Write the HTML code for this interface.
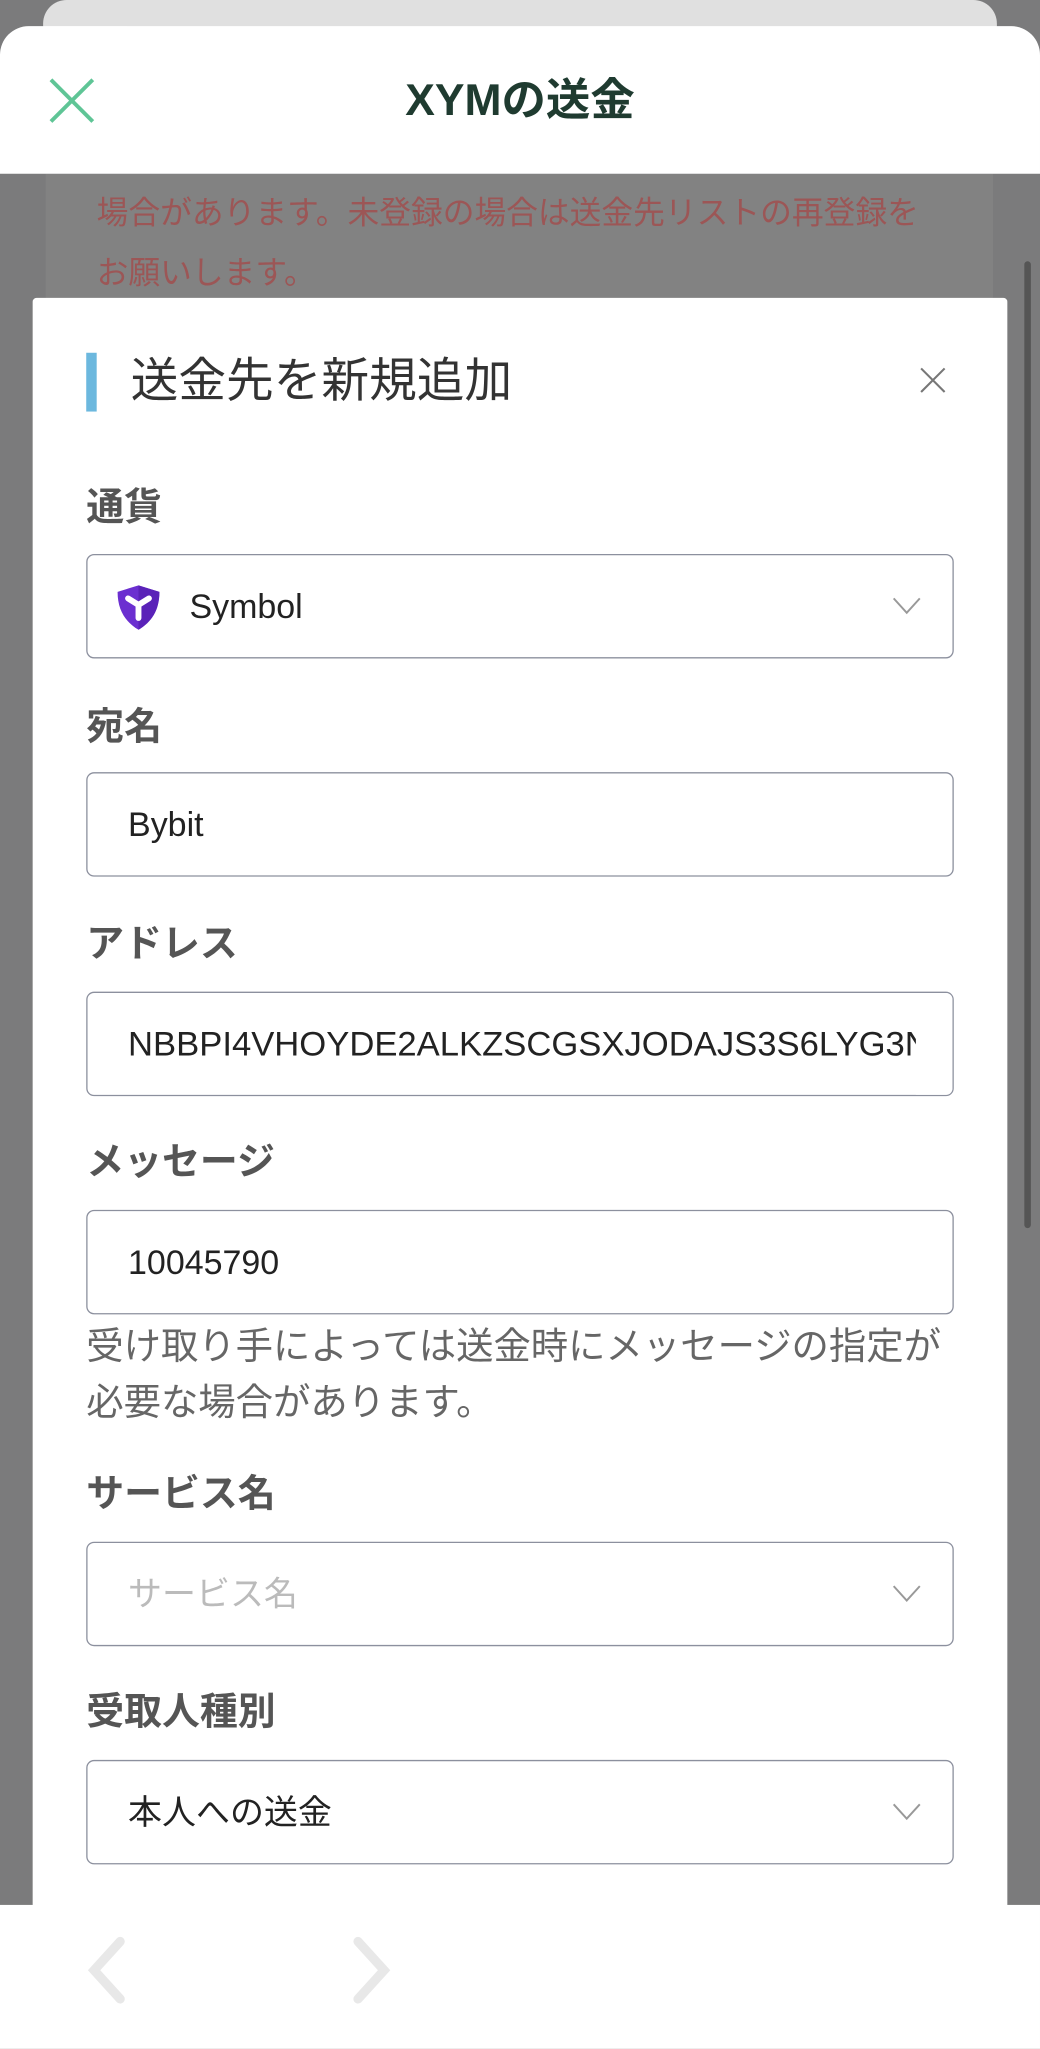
<!DOCTYPE html>
<html><head><meta charset="utf-8"><style>
html,body{margin:0;padding:0;width:1040px;height:2048px;overflow:hidden;background:#fff}
#w{position:absolute;left:0;top:0;width:796px;height:1568px;transform:scale(1.30653);transform-origin:0 0;background:#7b7b7c;font-family:"Liberation Sans","Noto Sans CJK JP",sans-serif;overflow:hidden}
.a{position:absolute}
.lbl{position:absolute;left:66px;font-size:29px;font-weight:bold;color:#555;line-height:32px}
.f{position:absolute;left:66px;width:662px;height:78px;border:1px solid #8c909e;border-radius:6px;background:#fff;box-sizing:content-box}
.f span{position:absolute;left:31px;top:0;line-height:78px;font-size:26px;color:#222;white-space:nowrap}
.chev{position:absolute;right:24px;top:32px}
</style></head><body><div id="w">
<div class="a" style="left:33px;top:0;width:730px;height:40px;background:#e0e0e0;border-radius:18px"></div>
<div class="a" style="left:35px;top:133px;width:725px;height:100px;background:#828282"></div>
<div class="a" style="left:74px;top:141px;font-size:24.3px;line-height:46px;color:#9c5656;white-space:nowrap">場合があります。未登録の場合は送金先リストの再登録を<br>お願いします。</div>
<div class="a" style="left:0;top:20px;width:796px;height:113px;background:#fff;border-radius:22px 22px 0 0"></div>
<svg class="a" style="left:36px;top:58px" width="38" height="38" viewBox="0 0 38 38"><path d="M3 3L35 35M35 3L3 35" stroke="#5fc596" stroke-width="3"/></svg>
<div class="a" style="left:0;width:796px;top:55px;text-align:center;font-size:34px;font-weight:bold;color:#1f3b30;line-height:44px">XYMの送金</div>
<div class="a" style="left:784px;top:200px;width:5px;height:740px;background:#555;border-radius:3px"></div>
<div class="a" style="left:25px;top:228px;width:746px;height:1240px;background:#fff;border-radius:3px"></div>
<div class="a" style="left:66px;top:270px;width:8px;height:45px;background:#6cb8de"></div>
<div class="a" style="left:100px;top:270px;font-size:36.5px;color:#333;line-height:44px;white-space:nowrap">送金先を新規追加</div>
<svg class="a" style="left:704px;top:281px" width="20" height="20" viewBox="0 0 20 20"><path d="M1 1L19 19M19 1L1 19" stroke="#777" stroke-width="1.6"/></svg>
<div class="lbl" style="top:373px">通貨</div>
<div class="f" style="top:424px"><svg class="a" style="left:22px;top:22px" width="34" height="36" viewBox="0 0 34 36"><path d="M17 1L33 6C33 20 27 29 17 35C7 29 1 20 1 6Z" fill="#6b2fd0"/><path d="M17 1L33 6C33 20 27 29 17 35Z" fill="#5a22b8"/><path d="M9 11L17 16L25 11M17 16V26" stroke="#fff" stroke-width="4.5" fill="none" stroke-linecap="round"/></svg><span style="left:78px">Symbol</span><svg class="chev" width="22" height="14" viewBox="0 0 22 14"><path d="M1 1L11 12L21 1" stroke="#999" stroke-width="1.5" fill="none"/></svg></div>
<div class="lbl" style="top:541px">宛名</div>
<div class="f" style="top:591px"><span>Bybit</span></div>
<div class="lbl" style="top:707px">アドレス</div>
<div class="f" style="top:759px;overflow:hidden"><span style="font-size:26.5px">NBBPI4VHOYDE2ALKZSCGSXJODAJS3S6LYG3N</span><div class="a" style="right:0;top:0;width:28px;height:78px;background:#fff"></div></div>
<div class="lbl" style="top:874px">メッセージ</div>
<div class="f" style="top:926px"><span>10045790</span></div>
<div class="a" style="left:66px;top:1010px;font-size:28.6px;line-height:43px;color:#666;white-space:nowrap">受け取り手によっては送金時にメッセージの指定が<br>必要な場合があります。</div>
<div class="lbl" style="top:1128px">サービス名</div>
<div class="f" style="top:1180px"><span style="color:#bbb">サービス名</span><svg class="chev" width="22" height="14" viewBox="0 0 22 14"><path d="M1 1L11 12L21 1" stroke="#999" stroke-width="1.5" fill="none"/></svg></div>
<div class="lbl" style="top:1295px">受取人種別</div>
<div class="f" style="top:1347px"><span>本人への送金</span><svg class="chev" width="22" height="14" viewBox="0 0 22 14"><path d="M1 1L11 12L21 1" stroke="#999" stroke-width="1.5" fill="none"/></svg></div>
<div class="a" style="left:0;top:1458px;width:796px;height:110px;background:#fff"></div>
<svg class="a" style="left:64px;top:1482px" width="36" height="52" viewBox="0 0 36 52"><path d="M28 4L8 26L28 48" stroke="#e8e8e8" stroke-width="7" fill="none" stroke-linecap="round"/></svg>
<svg class="a" style="left:266px;top:1482px" width="36" height="52" viewBox="0 0 36 52"><path d="M8 4L28 26L8 48" stroke="#e8e8e8" stroke-width="7" fill="none" stroke-linecap="round"/></svg>
</div></body></html>
